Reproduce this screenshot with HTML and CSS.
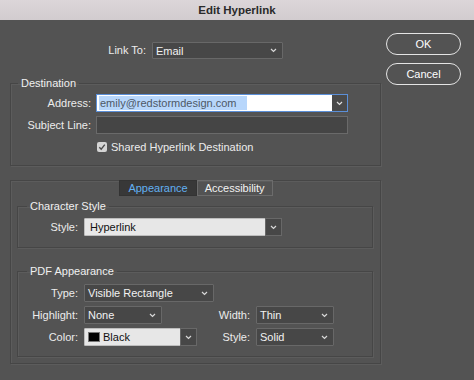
FILE: index.html
```html
<!DOCTYPE html>
<html lang="en">
<head>
    <meta charset="UTF-8">
    <meta name="viewport" content="width=device-width, initial-scale=1.0">
    <title>Edit Hyperlink</title>
    <link rel="stylesheet" href="styles.css">
</head>
<body>
    <div class="dialog">
        <div class="titlebar">Edit Hyperlink</div>
        <div class="content">
            <div class="main">
                <div class="link-row">
                    <span class="label link-label">Link To:</span>
                    <div class="select dark link-select">
                        <span class="value">Email</span>
                        <svg class="chev" width="7" height="5" viewBox="0 0 7 5"><path d="M1 1l2.5 2.5L6 1" fill="none" stroke="#d8d8d8" stroke-width="1.2"/></svg>
                    </div>
                </div>

                <fieldset class="group dest">
                    <legend>Destination</legend>
                    <div class="dest-grid">
                        <span class="label">Address:</span>
                        <div class="combo">
                            <span class="combo-field"><span class="selection">emily@redstormdesign.com</span></span>
                            <span class="combo-btn">
                                <svg class="chev" width="7" height="5" viewBox="0 0 7 5"><path d="M1 1l2.5 2.5L6 1" fill="none" stroke="#e0e0e0" stroke-width="1.2"/></svg>
                            </span>
                        </div>
                        <span class="label">Subject Line:</span>
                        <div class="text-field"></div>
                        <span></span>
                        <div class="check-row">
                            <span class="checkbox">
                                <svg width="8" height="8" viewBox="0 0 8 8"><path d="M1.3 4.2l1.9 2L6.8 1.6" fill="none" stroke="#4a4a4a" stroke-width="1.4"/></svg>
                            </span>
                            <span class="check-label">Shared Hyperlink Destination</span>
                        </div>
                    </div>
                </fieldset>

                <div class="tab-panel">
                    <div class="tabs">
                        <span class="tab active">Appearance</span>
                        <span class="tab">Accessibility</span>
                    </div>

                    <fieldset class="group inner char">
                        <legend>Character Style</legend>
                        <div class="pdf-grid">
                            <span class="label">Style:</span>
                            <div class="select light style-select">
                                <span class="value">Hyperlink</span>
                                <span class="select-btn">
                                    <svg class="chev" width="7" height="5" viewBox="0 0 7 5"><path d="M1 1l2.5 2.5L6 1" fill="none" stroke="#d8d8d8" stroke-width="1.2"/></svg>
                                </span>
                            </div>
                        </div>
                    </fieldset>

                    <fieldset class="group inner pdf">
                        <legend>PDF Appearance</legend>
                        <div class="pdf-grid">
                            <span class="label">Type:</span>
                            <div class="select dark type-select">
                                <span class="value">Visible Rectangle</span>
                                <svg class="chev" width="7" height="5" viewBox="0 0 7 5"><path d="M1 1l2.5 2.5L6 1" fill="none" stroke="#d8d8d8" stroke-width="1.2"/></svg>
                            </div>

                            <span class="label">Highlight:</span>
                            <div class="select dark small-select">
                                <span class="value">None</span>
                                <svg class="chev" width="7" height="5" viewBox="0 0 7 5"><path d="M1 1l2.5 2.5L6 1" fill="none" stroke="#d8d8d8" stroke-width="1.2"/></svg>
                            </div>
                            <span class="label">Width:</span>
                            <div class="select dark small-select">
                                <span class="value">Thin</span>
                                <svg class="chev" width="7" height="5" viewBox="0 0 7 5"><path d="M1 1l2.5 2.5L6 1" fill="none" stroke="#d8d8d8" stroke-width="1.2"/></svg>
                            </div>

                            <span class="label">Color:</span>
                            <div class="select light color-select">
                                <span class="value"><span class="swatch"></span>Black</span>
                                <span class="select-btn">
                                    <svg class="chev" width="7" height="5" viewBox="0 0 7 5"><path d="M1 1l2.5 2.5L6 1" fill="none" stroke="#d8d8d8" stroke-width="1.2"/></svg>
                                </span>
                            </div>
                            <span class="label">Style:</span>
                            <div class="select dark small-select">
                                <span class="value">Solid</span>
                                <svg class="chev" width="7" height="5" viewBox="0 0 7 5"><path d="M1 1l2.5 2.5L6 1" fill="none" stroke="#d8d8d8" stroke-width="1.2"/></svg>
                            </div>
                        </div>
                    </fieldset>
                </div>
            </div>

            <div class="buttons">
                <button class="btn">OK</button>
                <button class="btn">Cancel</button>
            </div>
        </div>
    </div>
</body>
</html>
```

FILE: styles.css
```css
html, body {
    margin: 0;
    padding: 0;
}
body {
    font-family: "Liberation Sans", Arial, sans-serif;
    font-size: 11px;
    color: #ececec;
    background-color: #535353;
}
.dialog {
    width: 474px;
    height: 380px;
    overflow: hidden;
}
.titlebar {
    height: 20px;
    line-height: 20px;
    text-align: center;
    font-weight: bold;
    font-size: 11.5px;
    color: #2a2a2a;
    background: linear-gradient(#dcd6d9, #d2cccf);
}
.content {
    display: flex;
    align-items: flex-start;
}
.main {
    width: 371px;
    padding-left: 10px;
}
.label {
    text-align: right;
    padding-right: 6px;
    line-height: 18px;
    white-space: nowrap;
}

/* link to row */
.link-row {
    display: flex;
    margin-top: 22px;
    height: 17px;
}
.link-label {
    width: 136px;
    line-height: 17px;
}

/* selects */
.select {
    display: flex;
    align-items: center;
    box-sizing: border-box;
    height: 18px;
    border: 1px solid #686868;
    border-radius: 1px;
    justify-self: start;
}
.select .value {
    flex: 1;
    display: flex;
    align-items: center;
    padding-left: 3px;
    white-space: nowrap;
}
.select.dark {
    background-color: #474747;
    color: #f2f2f2;
}
.select.dark .chev {
    margin-right: 5px;
}
.select.light {
    background-color: #e7e7e7;
    color: #111;
    border-color: #bdbdbd;
}
.select-btn {
    display: flex;
    align-items: center;
    justify-content: center;
    align-self: stretch;
    width: 15px;
    margin: -1px -1px -1px 0;
    background-color: #474747;
    border: 1px solid #686868;
}
.link-select {
    width: 131px;
    height: 17px;
}
.type-select {
    width: 130px;
    grid-column: 2 / 5;
}
.small-select {
    width: 78px;
}
.style-select {
    width: 198px;
    grid-column: 2 / 5;
}
.style-select .value {
    padding-left: 5px;
}
.color-select {
    width: 113px;
}
.swatch {
    display: inline-block;
    width: 10px;
    height: 8px;
    background-color: #000;
    border: 1px solid #777;
    margin-right: 3px;
}

/* groups */
.group {
    margin: 0;
    padding: 0;
    border: 1px solid #464646;
    box-shadow: 1px 1px 0 #5c5c5c, inset 1px 1px 0 #5c5c5c;
    min-inline-size: 0;
}
.group legend {
    line-height: 14px;
    padding: 0 3px;
    color: #f0f0f0;
}
.dest {
    margin-top: 17px;
    padding: 4px 0 11px 0;
}
.dest legend {
    margin-left: 7px;
}
.dest-grid {
    display: grid;
    grid-template-columns: 85px 252px;
    grid-template-rows: 18px 18px 16px;
    row-gap: 4px;
}
.dest-grid .label {
    padding-right: 5px;
}
.combo {
    display: flex;
    box-sizing: border-box;
    height: 18px;
    border: 1px solid #5b8fd8;
}
.combo-field {
    flex: 1;
    display: flex;
    align-items: center;
    background-color: #fff;
    padding-left: 2px;
}
.selection {
    background-color: #b7d6fb;
    color: #4e5866;
    padding: 0 10px 0 1px;
    line-height: 14px;
}
.combo-btn {
    display: flex;
    align-items: center;
    justify-content: center;
    width: 15px;
    background-color: #4a4a4a;
}
.text-field {
    box-sizing: border-box;
    height: 18px;
    background-color: #454545;
    border: 1px solid #6a6a6a;
}
.check-row {
    display: flex;
    align-items: center;
    margin-top: 1px;
}
.checkbox {
    display: flex;
    align-items: center;
    justify-content: center;
    width: 10px;
    height: 10px;
    margin-left: 1px;
    margin-right: 4px;
    border-radius: 2px;
    background-color: #d4d4d4;
}

/* tab panel */
.tab-panel {
    margin-top: 14px;
    border: 1px solid #464646;
    box-shadow: 1px 1px 0 #5c5c5c, inset 1px 1px 0 #5c5c5c;
    padding-bottom: 6px;
}
.tabs {
    display: flex;
    justify-content: center;
    margin-top: -1px;
    padding-left: 1px;
}
.tab {
    box-sizing: border-box;
    height: 16px;
    line-height: 14px;
    padding: 0 7px;
    border: 1px solid #6c6c6c;
    color: #f2f2f2;
}
.tab.active {
    background-color: #383838;
    border-color: #333;
    color: #62b0f2;
    padding: 0 8px;
}
.inner {
    margin: 0 7px 0 6px;
}
.char {
    margin-top: 3px;
    padding: 5px 0 11px 0;
}
.inner legend {
    margin-left: 9px;
}
.pdf {
    margin-top: 16px;
    padding: 6px 0 10px 0;
}
.pdf-grid {
    display: grid;
    grid-template-columns: 66px 113px 59px 78px;
    grid-auto-rows: 18px;
    row-gap: 4px;
}

/* buttons */
.buttons {
    display: flex;
    flex-direction: column;
    gap: 8px;
    margin-top: 13px;
    margin-left: 5px;
}
.btn {
    box-sizing: border-box;
    width: 75px;
    height: 22px;
    border: 1.5px solid #e4e4e4;
    border-radius: 11px;
    background-color: #535353;
    color: #fff;
    font-family: "Liberation Sans", Arial, sans-serif;
    font-size: 11px;
    padding: 0;
}
```
